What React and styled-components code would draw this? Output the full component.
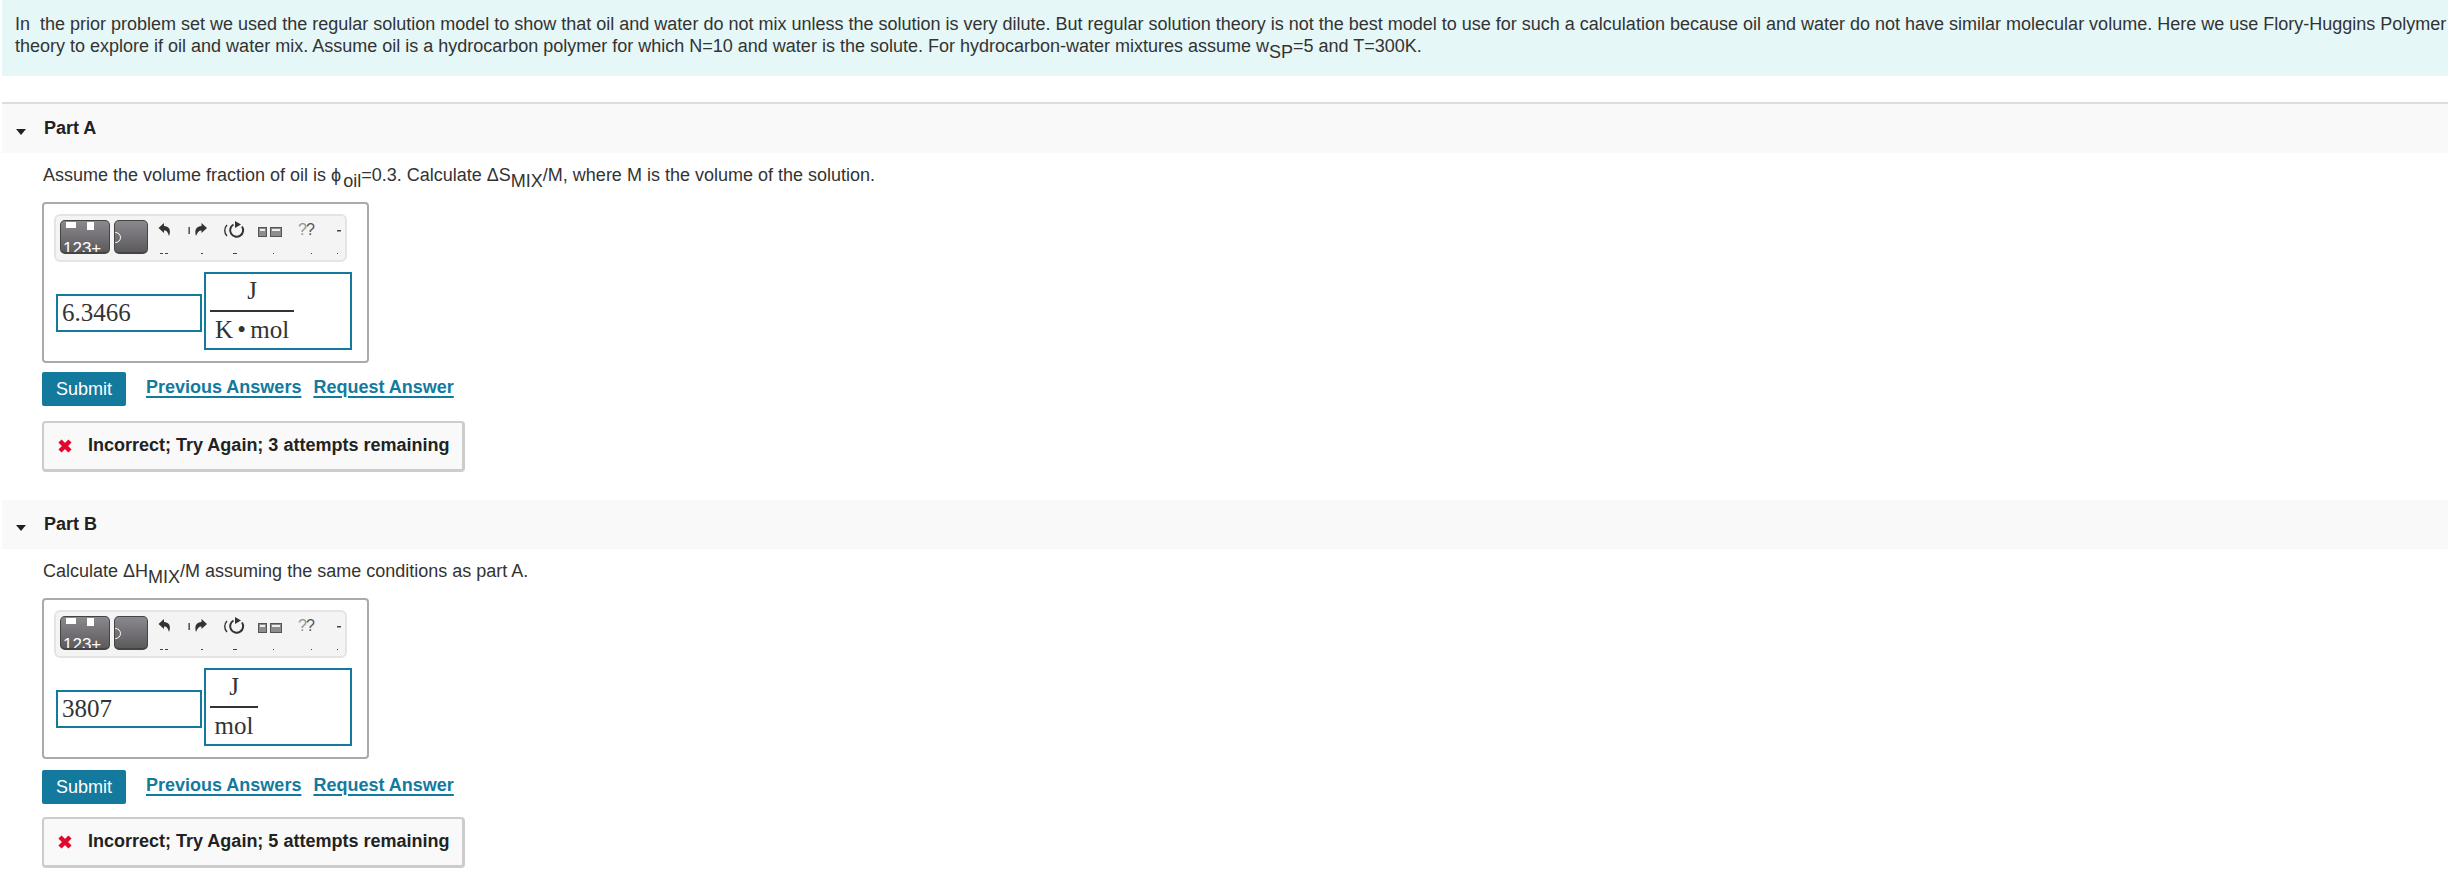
import React from "react";
import styled, { createGlobalStyle } from "styled-components";

const GlobalStyle = createGlobalStyle`
  html, body {
    margin: 0;
    padding: 0;
    background: #fff;
    color: #333;
    font-family: "Liberation Sans", Arial, sans-serif;
  }
`;

const Page = styled.div`
  width: 2448px;
  height: 876px;
  padding-left: 2px;
  box-sizing: border-box;
  overflow: hidden;
`;

const Intro = styled.div`
  height: 76px;
  box-sizing: border-box;
  padding: 13px 0 0 13px;
  background: #e5f7f7;
  font-size: 18px;
  line-height: 22px;
  white-space: nowrap;
`;

const Part = styled.section`
  margin-top: ${(p) => p.$top}px;
  border-top: ${(p) => (p.$ruled ? "2px solid #ddd" : "none")};
`;

const PartHeader = styled.div`
  height: 49px;
  display: flex;
  align-items: center;
  background: #f9f9f9;
  font-size: 18px;
  font-weight: bold;
  color: #222;
`;

const Caret = styled.span`
  width: 0;
  height: 0;
  margin: 7px 18px 0 14px;
  border-left: 5px solid transparent;
  border-right: 5px solid transparent;
  border-top: 6px solid #222;
`;

const PartBody = styled.div`
  padding-left: 40px;
`;

const Prompt = styled.p`
  margin: 0;
  padding: 11px 0 0 1px;
  height: 49px;
  box-sizing: border-box;
  font-size: 18px;
  line-height: 22px;
`;

const Sub = styled.span`
  position: relative;
  top: 6px;
  margin-left: ${(p) => p.$gap || 0}px;
`;

const AnswerBox = styled.div`
  width: 327px;
  height: 161px;
  box-sizing: border-box;
  padding: 10px;
  border: 2px solid #aaa;
  border-radius: 4px;
`;

const Toolbar = styled.div`
  width: 293px;
  height: 48px;
  box-sizing: border-box;
  padding: 4px 0 4px 4px;
  display: flex;
  border: 2px solid #e4e4e4;
  border-radius: 6px;
  background: #f4f4f4;
`;

const PadButton = styled.div`
  position: relative;
  flex: none;
  width: ${(p) => p.$w}px;
  height: 34px;
  margin-right: 4px;
  overflow: hidden;
  box-sizing: border-box;
  border-radius: 5px;
  border: 1px solid #444;
  border-bottom-width: 2px;
  background: linear-gradient(#8b898d, #5c5a5d);
`;

const PadSquare = styled.span`
  position: absolute;
  top: 1px;
  left: ${(p) => p.$x}px;
  width: ${(p) => p.$w}px;
  height: ${(p) => p.$h}px;
  background: #fff;
`;

const PadLabel = styled.span`
  position: absolute;
  left: 2px;
  top: 19px;
  color: #fff;
  font-size: 17px;
  line-height: 18px;
`;

const PadArc = styled.span`
  position: absolute;
  left: -5px;
  top: 11px;
  width: 11px;
  height: 11px;
  box-sizing: border-box;
  border: 1.5px solid #fff;
  border-radius: 50%;
`;

const Tools = styled.svg`
  flex: none;
  display: block;
  overflow: visible;
`;

const AnswerRow = styled.div`
  display: flex;
  align-items: flex-start;
  gap: 2px;
  margin: 10px 0 0 2px;
`;

const ValueInput = styled.div`
  width: 146px;
  height: 38px;
  margin-top: 22px;
  box-sizing: border-box;
  padding-left: 4px;
  border: 2px solid #147a9d;
  font-family: "Liberation Serif", "Times New Roman", serif;
  font-size: 25px;
  line-height: 33px;
  color: #333;
`;

const UnitBox = styled.div`
  width: 148px;
  height: 78px;
  box-sizing: border-box;
  padding: 0 4px;
  border: 2px solid #147a9d;
  font-family: "Liberation Serif", "Times New Roman", serif;
  font-size: 25px;
  color: #333;
`;

const Fraction = styled.div`
  display: inline-flex;
  flex-direction: column;
  align-items: center;
  width: ${(p) => p.$w}px;
`;

const Numerator = styled.div`
  width: 100%;
  height: 36px;
  line-height: 34px;
  text-align: center;
  border-bottom: 2px solid #333;
`;

const Denominator = styled.div`
  height: 36px;
  line-height: 36px;
  word-spacing: -2px;
  white-space: nowrap;
`;

const Actions = styled.div`
  display: flex;
  align-items: center;
  margin-top: ${(p) => p.$top}px;
`;

const SubmitButton = styled.button`
  width: 84px;
  height: 34px;
  padding: 0;
  border: none;
  border-radius: 2px;
  background: #147a9d;
  color: #fff;
  font-family: inherit;
  font-size: 18px;
  margin-right: 20px;
`;

const ActionLink = styled.a`
  margin: -3px 12px 0 0;
  color: #147a9d;
  font-size: 18px;
  font-weight: bold;
  text-decoration: underline;
  text-decoration-thickness: 2px;
  text-underline-offset: 3px;
`;

const Feedback = styled.div`
  display: flex;
  align-items: center;
  width: 423px;
  height: 51px;
  margin-top: ${(p) => p.$top}px;
  box-sizing: border-box;
  padding: 0 0 1px 13px;
  border: 2px solid #ccc;
  border-bottom-width: 3px;
  border-right-width: 3px;
  border-radius: 4px;
  background: #f9f9f9;
  color: #222;
  font-size: 18px;
  font-weight: bold;
  white-space: nowrap;
`;

const CrossIcon = styled.svg`
  margin-right: 15px;
  flex: none;
`;

const ToolGlyphs = () => (
  <Tools width="189" height="36" viewBox="0 0 189 36">
    <g fill="#333">
      <path d="M6.500 8 L12 3 V6 C16.500 6 19.500 9.500 17 16 C16 12.500 15 10.500 12 10.500 V13 Z" />
      <path d="M55 8 L49.500 3 V6 C45 6 42 9.500 44 16 C45.500 12.500 46.500 10.500 49.500 10.500 V13 Z" />
      <rect x="36.500" y="7" width="1.300" height="7" />
      <path d="M83 1 L89 4.500 L83 8 Z" />
    </g>
    <g fill="none" stroke="#333">
      <path d="M75 5 C72 8 72 13 75 16" strokeWidth="1.400" />
      <path d="M81.500 4.500 A6.500 6.500 0 1 0 90 6.500" strokeWidth="2" />
    </g>
    <g fill="#8d8d8d" stroke="#555" strokeWidth="1">
      <rect x="106.500" y="7.500" width="8" height="9" />
      <rect x="118.500" y="7.500" width="11" height="9" />
    </g>
    <g fill="#eee">
      <rect x="108" y="9" width="5" height="2" />
      <rect x="120" y="9" width="8" height="2" />
    </g>
    <g fill="#444">
      <rect x="185" y="10" width="4" height="1.500" />
      <rect x="8" y="33" width="3" height="1" />
      <rect x="13" y="33" width="3" height="1" />
      <rect x="49" y="33" width="2" height="1" />
      <rect x="81" y="33" width="4" height="1" />
      <rect x="121" y="33" width="1" height="1" />
      <rect x="159" y="33" width="1" height="1" />
      <rect x="185" y="33" width="1" height="1" />
    </g>
    <g fontFamily="Liberation Sans, sans-serif" fontSize="16" fill="#555">
      <text x="146" y="15" opacity="0.6">
        ?
      </text>
      <text x="154" y="15">
        ?
      </text>
    </g>
  </Tools>
);

const AnswerTool = ({ value, unitTop, unitBottom, fracWidth }) => (
  <AnswerBox>
    <Toolbar>
      <PadButton $w={50}>
        <PadSquare $x={5} $w={10} $h={6} />
        <PadSquare $x={26} $w={7} $h={8} />
        <PadLabel>123+</PadLabel>
      </PadButton>
      <PadButton $w={34}>
        <PadArc />
      </PadButton>
      <ToolGlyphs />
    </Toolbar>
    <AnswerRow>
      <ValueInput>{value}</ValueInput>
      <UnitBox>
        <Fraction $w={fracWidth}>
          <Numerator>{unitTop}</Numerator>
          <Denominator>{unitBottom}</Denominator>
        </Fraction>
      </UnitBox>
    </AnswerRow>
  </AnswerBox>
);

const Cross = () => (
  <CrossIcon width="16" height="16" viewBox="0 0 16 16">
    <path d="M3 3 L13 13 M13 3 L3 13" stroke="#e2062c" strokeWidth="4.500" />
  </CrossIcon>
);

const parts = [
  {
    name: "Part A",
    top: 26,
    ruled: true,
    prompt: (
      <>
        Assume the volume fraction of oil is ϕ<Sub $gap={2}>oil</Sub>=0.3. Calculate ΔS<Sub>MIX</Sub>/M, where M is the
        volume of the solution.
      </>
    ),
    value: "6.3466",
    unitTop: "J",
    unitBottom: "K • mol",
    fracWidth: 84,
    actionsTop: 9,
    feedbackTop: 15,
    feedback: "Incorrect; Try Again; 3 attempts remaining",
  },
  {
    name: "Part B",
    top: 28,
    prompt: (
      <>
        Calculate ΔH<Sub>MIX</Sub>/M assuming the same conditions as part A.
      </>
    ),
    value: "3807",
    unitTop: "J",
    unitBottom: "mol",
    fracWidth: 48,
    actionsTop: 11,
    feedbackTop: 13,
    feedback: "Incorrect; Try Again; 5 attempts remaining",
  },
];

export default function App() {
  return (
    <Page>
      <GlobalStyle />
      <Intro>
        In &nbsp;the prior problem set we used the regular solution model to show that oil and water do not mix unless
        the solution is very dilute. But regular solution theory is not the best model to use for such a calculation
        because oil and water do not have similar molecular volume. Here we use Flory-Huggins Polymer
        <br />
        theory to explore if oil and water mix. Assume oil is a hydrocarbon polymer for which N=10 and water is the
        solute. For hydrocarbon-water mixtures assume w<Sub>SP</Sub>=5 and T=300K.
      </Intro>
      {parts.map((part) => (
        <Part key={part.name} $top={part.top} $ruled={part.ruled}>
          <PartHeader>
            <Caret />
            {part.name}
          </PartHeader>
          <PartBody>
            <Prompt>{part.prompt}</Prompt>
            <AnswerTool
              value={part.value}
              unitTop={part.unitTop}
              unitBottom={part.unitBottom}
              fracWidth={part.fracWidth}
            />
            <Actions $top={part.actionsTop}>
              <SubmitButton>Submit</SubmitButton>
              <ActionLink>Previous Answers</ActionLink>
              <ActionLink>Request Answer</ActionLink>
            </Actions>
            <Feedback $top={part.feedbackTop}>
              <Cross />
              {part.feedback}
            </Feedback>
          </PartBody>
        </Part>
      ))}
    </Page>
  );
}
